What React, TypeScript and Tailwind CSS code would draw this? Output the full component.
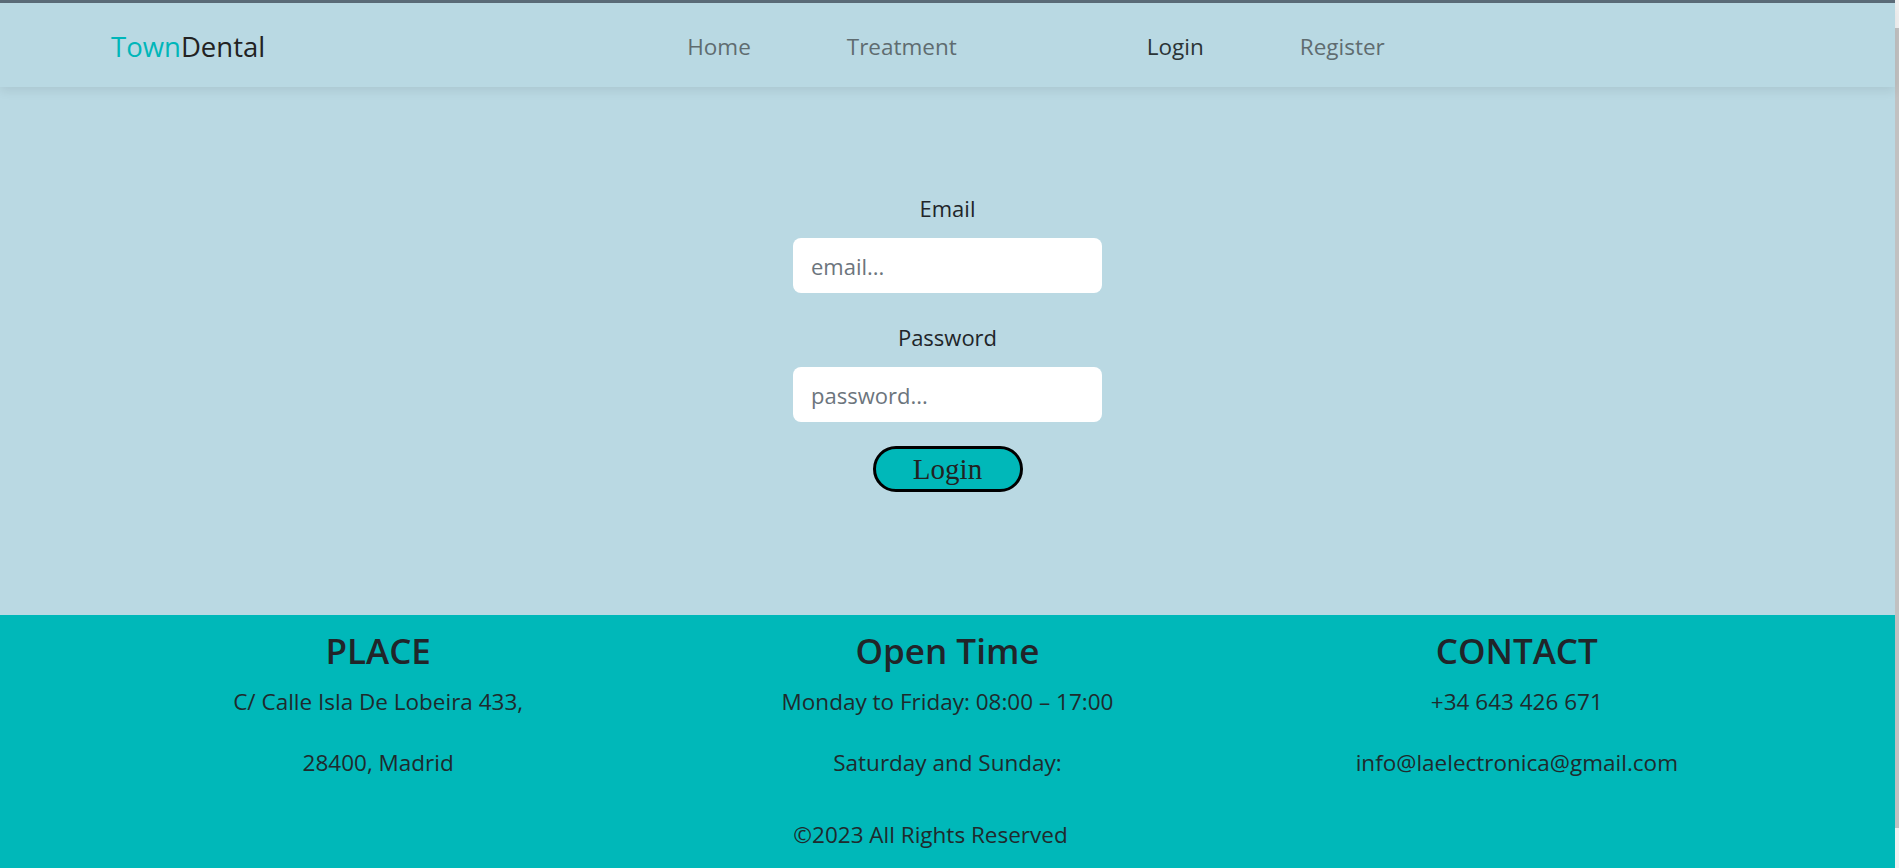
import { useState } from "react";

const sans = { fontFamily: '"Open Sans", "Noto Sans", sans-serif' };

function NavLink({ label, active = false }: { label: string; active?: boolean }) {
  return (
    <a
      href="#"
      className={`px-[48px] text-[22.5px] leading-none ${active ? "text-[#2b3436]" : "text-[#5f6c70]"}`}
    >
      {label}
    </a>
  );
}

function FooterColumn({ title, lines }: { title: string; lines: string[] }) {
  return (
    <div className="flex flex-col items-center">
      <h3 className="text-[35px] font-semibold leading-[42px] text-[#212529]">{title}</h3>
      <div className="mt-[15px] flex flex-col items-center gap-[31px]">
        {lines.map((line) => (
          <p key={line} className="text-[22.5px] leading-[30px] text-[#1f2a2d]">
            {line}
          </p>
        ))}
      </div>
    </div>
  );
}

export default function App() {
  const [email, setEmail] = useState("");
  const [password, setPassword] = useState("");

  return (
    <div className="flex min-h-screen bg-white" style={sans}>
      <div className="flex-1 bg-[#bad9e3]">
        <div className="h-[3px] bg-[#5b6c79]" />

        <header className="relative z-10 flex h-[84px] items-center bg-[#b9d9e3] pl-[111px] pt-[4px] shadow-[0_4px_10px_rgba(0,0,0,0.08)]">
          <a href="#" className="text-[27.5px] leading-none text-[#222]">
            <span className="text-[#00b6b9]">Town</span>Dental
          </a>
          <nav className="ml-[374px] flex items-center">
            <NavLink label="Home" />
            <NavLink label="Treatment" />
            <div className="w-[94px]" />
            <NavLink label="Login" active />
            <NavLink label="Register" />
          </nav>
        </header>

        <main className="flex h-[528px] flex-col items-center pt-[106px]">
          <label className="text-[22px] leading-[30px] text-[#212529]">Email</label>
          <input
            value={email}
            onChange={(e) => setEmail(e.target.value)}
            placeholder="email..."
            className="mt-[15px] h-[55px] w-[309px] rounded-[8px] bg-white px-[18px] text-[22px] text-[#212529] outline-none placeholder:text-[#6c757d]"
          />
          <label className="mt-[29px] text-[22px] leading-[30px] text-[#212529]">Password</label>
          <input
            type="password"
            value={password}
            onChange={(e) => setPassword(e.target.value)}
            placeholder="password..."
            className="mt-[15px] h-[55px] w-[309px] rounded-[8px] bg-white px-[18px] text-[22px] text-[#212529] outline-none placeholder:text-[#6c757d]"
          />
          <button
            type="button"
            className="mt-[24px] h-[46px] w-[150px] rounded-full border-[3px] border-black bg-[#00b8b9] text-[29px] leading-none text-[#222]"
            style={{ fontFamily: '"Liberation Serif", serif' }}
          >
            Login
          </button>
        </main>

        <footer className="bg-[#00b8b9] pb-[20px] pt-[15px]">
          <div className="mx-auto grid w-[1708px] grid-cols-3">
            <FooterColumn title="PLACE" lines={["C/ Calle Isla De Lobeira 433,", "28400, Madrid"]} />
            <FooterColumn
              title="Open Time"
              lines={["Monday to Friday: 08:00 – 17:00", "Saturday and Sunday:"]}
            />
            <FooterColumn title="CONTACT" lines={["+34 643 426 671", "info@laelectronica@gmail.com"]} />
          </div>
          <p className="mt-[42px] pr-[34px] text-center text-[22.5px] leading-[30px] text-[#1f2a2d]">
            ©2023 All Rights Reserved
          </p>
        </footer>
      </div>

      <div className="w-[4px] bg-[#f1f1f1]">
        <div className="mt-[28px] h-[800px] w-full bg-[#c1c1c1]" />
      </div>
    </div>
  );
}
